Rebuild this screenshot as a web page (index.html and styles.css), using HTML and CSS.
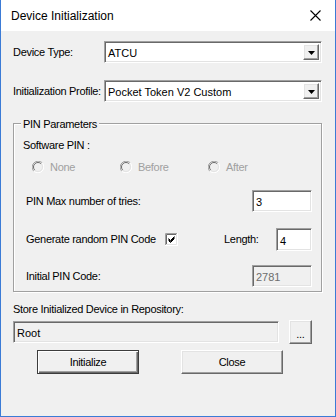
FILE: index.html
```html
<!DOCTYPE html>
<html>
<head>
<meta charset="utf-8">
<link rel="stylesheet" href="styles.css">
</head>
<body>
<div class="window">
  <div class="titlebar">
    <span class="title">Device Initialization</span>
    <svg class="close" width="11" height="11" viewBox="0 0 11 11"><path d="M0.5 0.5 L10.5 10.5 M10.5 0.5 L0.5 10.5" stroke="#000" stroke-width="1.1" fill="none"/></svg>
  </div>
  <div class="content">
    <div class="row first">
      <span class="lbl">Device Type:</span>
      <div class="combo sunken"><span class="val">ATCU</span><span class="drop raised"><svg width="7" height="4" viewBox="0 0 7 4"><path d="M0 0 H7 L3.5 4 Z" fill="#000"/></svg></span></div>
    </div>
    <div class="row second">
      <span class="lbl">Initialization Profile:</span>
      <div class="combo sunken"><span class="val">Pocket Token V2 Custom</span><span class="drop raised"><svg width="7" height="4" viewBox="0 0 7 4"><path d="M0 0 H7 L3.5 4 Z" fill="#000"/></svg></span></div>
    </div>
    <div class="group">
      <span class="legend">PIN Parameters</span>
      <div class="sw">Software PIN :</div>
      <div class="radios">
        <span class="radio"><svg width="12" height="12" viewBox="0 0 12 12"><path d="M1.76 10.24 A6 6 0 0 1 10.24 1.76" stroke="#a0a0a0" fill="none"/><path d="M10.24 1.76 A6 6 0 0 1 1.76 10.24" stroke="#fff" fill="none"/><circle cx="6" cy="6" r="4.5" fill="#f0f0f0"/><path d="M2.8 9.2 A4.5 4.5 0 0 1 9.2 2.8" stroke="#696969" fill="none"/><path d="M9.2 2.8 A4.5 4.5 0 0 1 2.8 9.2" stroke="#e3e3e3" fill="none"/></svg>None</span>
        <span class="radio"><svg width="12" height="12" viewBox="0 0 12 12"><path d="M1.76 10.24 A6 6 0 0 1 10.24 1.76" stroke="#a0a0a0" fill="none"/><path d="M10.24 1.76 A6 6 0 0 1 1.76 10.24" stroke="#fff" fill="none"/><circle cx="6" cy="6" r="4.5" fill="#f0f0f0"/><path d="M2.8 9.2 A4.5 4.5 0 0 1 9.2 2.8" stroke="#696969" fill="none"/><path d="M9.2 2.8 A4.5 4.5 0 0 1 2.8 9.2" stroke="#e3e3e3" fill="none"/></svg>Before</span>
        <span class="radio"><svg width="12" height="12" viewBox="0 0 12 12"><path d="M1.76 10.24 A6 6 0 0 1 10.24 1.76" stroke="#a0a0a0" fill="none"/><path d="M10.24 1.76 A6 6 0 0 1 1.76 10.24" stroke="#fff" fill="none"/><circle cx="6" cy="6" r="4.5" fill="#f0f0f0"/><path d="M2.8 9.2 A4.5 4.5 0 0 1 9.2 2.8" stroke="#696969" fill="none"/><path d="M9.2 2.8 A4.5 4.5 0 0 1 2.8 9.2" stroke="#e3e3e3" fill="none"/></svg>After</span>
      </div>
      <div class="grow tries">
        <span>PIN Max number of tries:</span>
        <div class="edit sunken w60">3</div>
      </div>
      <div class="grow gen">
        <span class="genlbl">Generate random PIN Code</span>
        <svg class="check" width="13" height="13" viewBox="0 0 13 13"><rect x="0" y="0" width="13" height="13" fill="#fff"/><path d="M0.5 12 V0.5 H12" stroke="#a0a0a0" fill="none"/><path d="M1.5 11 V1.5 H11" stroke="#696969" fill="none"/><path d="M0 12.5 H12.5 V0" stroke="#fff" fill="none"/><path d="M1 11.5 H11.5 V1" stroke="#e3e3e3" fill="none"/><path d="M3.5 5.5 L5.5 7.5 L9.5 3.5 M3.5 6.5 L5.5 8.5 L9.5 4.5 M3.5 7.5 L5.5 9.5 L9.5 5.5" stroke="#000" fill="none"/></svg>
        <span class="lenlbl">Length:</span>
        <div class="edit sunken w36 len">4</div>
      </div>
      <div class="grow init">
        <span>Initial PIN Code:</span>
        <div class="edit sunken w60 disabled">2781</div>
      </div>
    </div>
    <div class="store-lbl">Store Initialized Device in Repository:</div>
    <div class="store-row">
      <div class="edit sunken ro">Root</div>
      <div class="btn raised dots">...</div>
    </div>
    <div class="btns">
      <div class="btn default">Initialize</div>
      <div class="btn raised">Close</div>
    </div>
  </div>
</div>
</body>
</html>
```
FILE: styles.css
```css
html, body {
  margin: 0;
  padding: 0;
  background: #f0f0f0;
}
.window {
  width: 336px;
  height: 417px;
  box-sizing: border-box;
  border: 1px solid #3b7bd6;
  border-top: none;
  background: #f0f0f0;
  font-family: "Liberation Sans", Arial, sans-serif;
  font-size: 11px;
  letter-spacing: -0.3px;
  color: #000;
  overflow: hidden;
}
.titlebar {
  height: 31px;
  background: #fff;
  display: flex;
  align-items: center;
  padding: 0 10px 0 10px;
  letter-spacing: 0;
}
.title {
  font-size: 12px;
  flex: 1;
  padding-top: 1px;
}
.close {
  margin-right: 4px;
  display: block;
}
.content {
  padding: 0 13px 0 12px;
}
.row {
  display: flex;
  align-items: center;
  height: 22px;
}
.row.first { margin-top: 10px; }
.row.second { margin-top: 17px; }
.lbl {
  width: 91px;
  flex: none;
  white-space: nowrap;
}
.sunken {
  border: 1px solid;
  border-color: #a0a0a0 #fff #fff #a0a0a0;
  box-shadow: inset 1px 1px #696969, inset -1px -1px #e3e3e3;
  box-sizing: border-box;
}
.raised {
  border: 1px solid;
  border-color: #fff #696969 #696969 #fff;
  box-shadow: inset -1px -1px #a0a0a0, inset 1px 1px #e3e3e3;
  box-sizing: border-box;
  background: #f0f0f0;
}
.combo {
  flex: 1;
  height: 22px;
  background: #fff;
  display: flex;
  align-items: center;
  padding: 0 2px 0 3px;
}
.combo .val {
  flex: 1;
  font-size: 11px;
  letter-spacing: 0;
  padding-top: 1px;
}
.drop {
  width: 16px;
  height: 16px;
  display: flex;
  align-items: center;
  justify-content: center;
}
.drop svg { display: block; margin-top: 1px; }
.group {
  position: relative;
  margin-top: 21px;
  border: 1px solid #a0a0a0;
  box-shadow: inset 1px 1px #fff, 1px 1px #fff;
  height: 169px;
  box-sizing: border-box;
  padding: 0 9px 0 12px;
}
.legend {
  position: absolute;
  top: -7px;
  left: 7px;
  background: #f0f0f0;
  padding: 0 2px;
  line-height: 14px;
}
.sw {
  margin-top: 14px;
  margin-left: -3px;
  line-height: 14px;
}
.radios {
  margin-top: 8px;
  display: flex;
  line-height: 14px;
  padding-left: 6px;
}
.radio {
  display: flex;
  align-items: center;
  color: #a0a0a0;
  width: 88px;
  flex: none;
}
.radio + .radio + .radio { width: 90px; }
.radio svg {
  display: block;
  margin-right: 6px;
}
.grow {
  display: flex;
  align-items: center;
  height: 22px;
}
.tries { margin-top: 16px; }
.gen { margin-top: 16px; }
.init { margin-top: 15px; }
.grow .edit { margin-left: auto; }
.edit {
  height: 22px;
  background: #fff;
  padding: 4px 3px 0 3px;
  line-height: 14px;
  font-size: 11px;
  letter-spacing: 0;
}
.w60 { width: 60px; }
.w36 { width: 36px; }
.len { height: 23px; padding-top: 5px; }
.genlbl { width: 139px; flex: none; white-space: nowrap; }
.check { display: block; flex: none; }
.lenlbl { margin-left: 46px; }
.disabled {
  background: #f0f0f0;
  color: #6d6d6d;
}
.store-lbl {
  margin-top: 10px;
  line-height: 14px;
}
.store-row {
  margin-top: 4px;
  display: flex;
  align-items: center;
  height: 24px;
}
.ro {
  width: 266px;
  background: #f0f0f0;
}
.btn {
  height: 24px;
  display: flex;
  align-items: center;
  justify-content: center;
  font-size: 11px;
  box-sizing: border-box;
}
.dots {
  width: 23px;
  margin-left: 10px;
  padding-top: 3px;
}
.btns {
  margin-top: 6px;
  display: flex;
  padding-left: 24px;
  gap: 42px;
}
.btns .btn { width: 102px; }
.default {
  border: 1px solid #3c3c3c;
  box-shadow: inset 1px 1px #fff, inset -1px -1px #696969, inset -2px -2px #a0a0a0;
  background: #f0f0f0;
}
```
